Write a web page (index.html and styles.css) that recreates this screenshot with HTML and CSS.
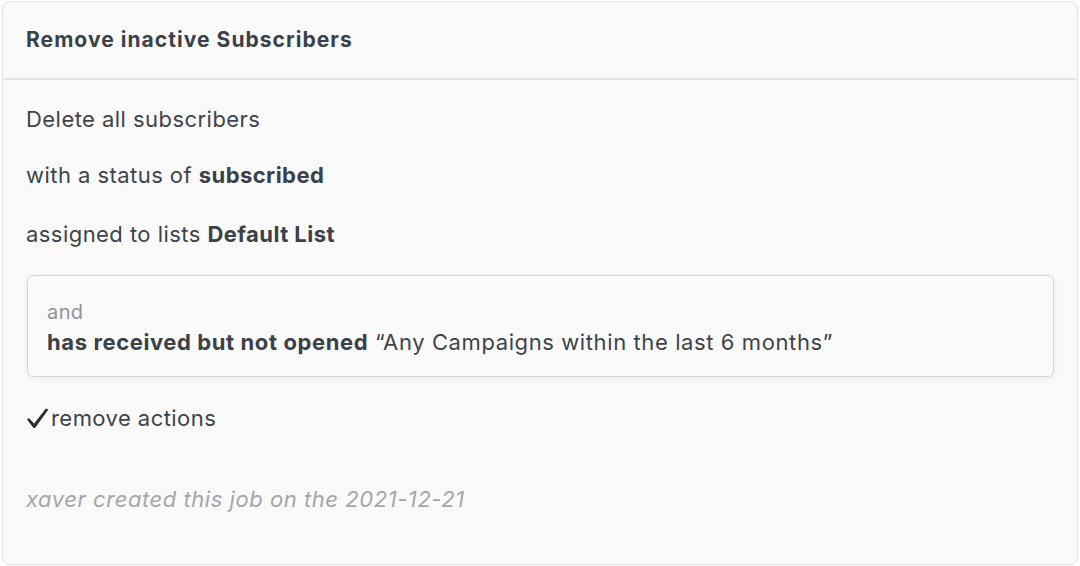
FILE: index.html
```html
<!DOCTYPE html>
<html lang="en">
<head>
<meta charset="utf-8">
<title>Remove inactive Subscribers</title>
<link rel="stylesheet" href="styles.css">
</head>
<body>
<section class="card">
  <header class="card-header">
    <h2 class="card-title">Remove inactive Subscribers</h2>
  </header>
  <div class="card-body">
    <p class="line">Delete all subscribers</p>
    <p class="line">with a status of <strong>subscribed</strong></p>
    <p class="line line-3">assigned to lists <strong>Default List</strong></p>
    <div class="condition">
      <p class="cond-and">and</p>
      <p class="cond-text"><strong>has received but not opened</strong> “Any Campaigns within the last 6 months”</p>
    </div>
    <p class="line action"><svg class="check" width="22" height="21" viewBox="0 0 22 21" aria-hidden="true"><polygon points="0,11.6 1.9,10 7.1,15.4 18.9,0.4 21.4,1.6 8.1,20 6.5,20" fill="#2b3035"/></svg>remove actions</p>
    <p class="footer-note">xaver created this job on the 2021-12-21</p>
  </div>
</section>
</body>
</html>
```
FILE: styles.css
```css
* { box-sizing: border-box; }
html, body { margin: 0; padding: 0; background: #ffffff; }
body {
  font-family: Inter, "Noto Sans", sans-serif;
  color: #3d444b;
  padding: 1px 2px 1px 2px;
  height: 566px;
}
.card {
  height: 564px;
  background: #fafafa;
  border: 1px solid #e2e2e2;
  border-radius: 8px;
}
.card-header {
  height: 78px;
  border-bottom: 2px solid #e4e4e4;
  display: flex;
  align-items: center;
  padding: 0 0 1px 23px;
}
.card-title {
  margin: 0;
  font-size: 21px;
  font-weight: 700;
  color: #3a4148;
  letter-spacing: 1.05px;
}
.card-body {
  padding: 24px 23px 0 23px;
  display: flex;
  flex-direction: column;
}
.line {
  margin: 0 0 26px 0;
  font-size: 22px;
  line-height: 30px;
  letter-spacing: 0.45px;
}
.line strong { font-weight: 700; color: #3a4148; }
.line-3 { margin-top: 3px; }
.condition {
  margin: 0 0 26px 1px;
  border: 1px solid #d3d6da;
  border-radius: 6px;
  background: #fafafa;
  box-shadow: 0 2px 6px rgba(0, 0, 0, 0.06);
  padding: 21px 19px 19px 19px;
}
.cond-and {
  margin: 0;
  font-size: 20px;
  line-height: 30px;
  color: #8f9499;
  letter-spacing: 0.4px;
}
.cond-text {
  margin: 0;
  font-size: 22px;
  line-height: 30px;
  letter-spacing: 0.6px;
}
.cond-text strong { font-weight: 700; color: #3a4148; letter-spacing: 0.6px; }
.action {
  display: flex;
  align-items: center;
  margin-bottom: 51px;
}
.check { margin: 0 2px 0 1px; flex: none; }
.footer-note {
  margin: 0;
  font-size: 22px;
  line-height: 30px;
  font-style: italic;
  color: #a3a7ab;
  letter-spacing: 0.55px;
}
```
